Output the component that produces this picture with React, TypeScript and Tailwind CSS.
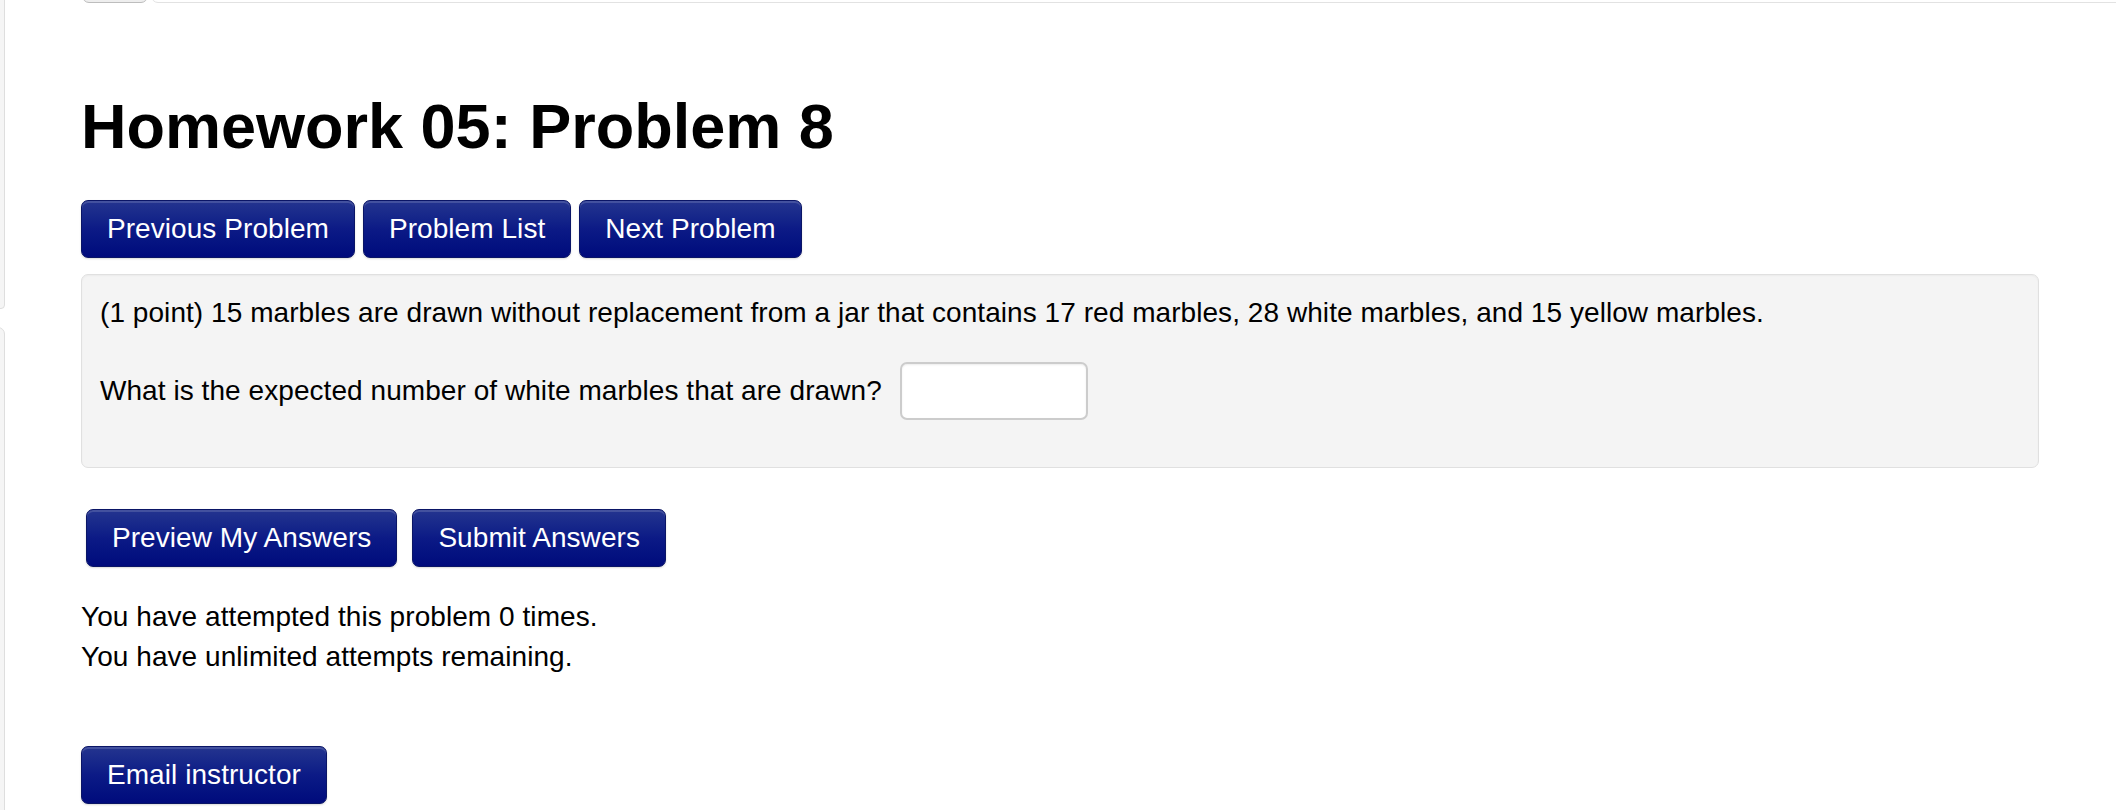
const font = "font-['Liberation_Sans','Helvetica','Arial',sans-serif]"

function NavyButton({ label, className = '' }: { label: string; className?: string }) {
  return (
    <button
      type="button"
      className={`h-[58px] rounded-[7px] border border-[#0a1566] bg-gradient-to-b from-[#24348f] via-[#0c1a86] to-[#000a7c] px-[25px] text-[28px] leading-[40px] tracking-[0.06px] text-white shadow-[inset_0_2px_0_rgba(255,255,255,0.15),0_1px_2px_rgba(0,0,0,0.15)] ${className}`}
    >
      {label}
    </button>
  )
}

export default function App() {
  return (
    <div className={`relative min-h-[810px] w-full overflow-hidden bg-white text-black ${font}`}>
      {/* bits of the page above, scrolled off */}
      <div className="absolute left-[82px] top-[-20px] h-[23px] w-[66px] rounded-b-[7px] border border-[#bdbdbd] bg-[#eeeeee]" />
      <div className="absolute left-[151px] right-[-10px] top-[-20px] h-[23px] rounded-bl-[7px] border border-[#e2e2e2] bg-white" />

      {/* sidebar edges */}
      <div className="absolute left-[-20px] top-[-20px] h-[329px] w-[25px] rounded-br-[4px] border border-[#dedede] bg-[#f5f5f5]" />
      <div className="absolute left-[-20px] top-[327px] h-[600px] w-[25px] rounded-tr-[7px] border border-[#dedede] bg-[#f5f5f5]" />

      <div className="pl-[81px] pt-[91px] pb-[20px]">
        <h1 className="text-[63px] font-bold leading-[70px]">Homework 05: Problem 8</h1>

        <div className="mt-[39px] flex gap-[8px]">
          <NavyButton label="Previous Problem" />
          <NavyButton label="Problem List" />
          <NavyButton label="Next Problem" />
        </div>

        {/* problem body */}
        <div className="mt-[16px] w-[1958px] rounded-[7px] border border-[#e0e0e0] bg-[#f4f4f4] pb-[47px] pl-[18px] pt-[18px] text-[28px] leading-[40px] tracking-[0.06px] shadow-[inset_0_1px_2px_rgba(0,0,0,0.04)]">
          <p>
            (1 point) 15 marbles are drawn without replacement from a jar that contains 17 red marbles, 28 white
            marbles, and 15 yellow marbles.
          </p>
          <div className="mt-[29px] flex items-center gap-[18px]">
            <span>What is the expected number of white marbles that are drawn?</span>
            <input
              type="text"
              aria-label="answer"
              className="h-[58px] w-[188px] rounded-[7px] border-2 border-[#cccccc] bg-white px-3 text-[28px] shadow-[inset_0_1px_2px_rgba(0,0,0,0.08)] outline-none"
            />
          </div>
        </div>

        <div className="ml-[5px] mt-[41px] flex gap-[15px]">
          <NavyButton label="Preview My Answers" />
          <NavyButton label="Submit Answers" />
        </div>

        <div className="mt-[30px] text-[28px] leading-[40px] tracking-[0.06px]">
          <p>You have attempted this problem 0 times.</p>
          <p>You have unlimited attempts remaining.</p>
        </div>

        <div className="mt-[69px]">
          <NavyButton label="Email instructor" />
        </div>
      </div>
    </div>
  )
}
